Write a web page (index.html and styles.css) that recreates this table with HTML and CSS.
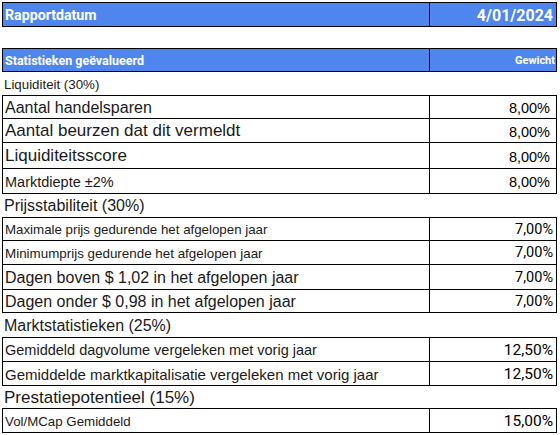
FILE: index.html
```html
<!DOCTYPE html>
<html lang="nl">
<head>
<meta charset="utf-8">
<title>Rapport</title>
<link rel="stylesheet" href="styles.css">
</head>
<body>
<div class="sheet">
  <div class="hdr hdr-top">
    <div class="cell">Rapportdatum</div>
    <div class="cell val date">4/01/2024</div>
  </div>
  <div class="hdr hdr-sub">
    <div class="cell">Statistieken geëvalueerd</div>
    <div class="cell val weight">Gewicht</div>
  </div>

  <div class="cat h23 f13">Liquiditeit (30%)</div>
  <div class="group">
    <div class="row h22"><div class="cell name f16">Aantal handelsparen</div><div class="cell val arial">8,00%</div></div>
    <div class="row h24"><div class="cell name f17">Aantal beurzen dat dit vermeldt</div><div class="cell val arial">8,00%</div></div>
    <div class="row h26"><div class="cell name f17">Liquiditeitsscore</div><div class="cell val arial">8,00%</div></div>
    <div class="row h25"><div class="cell name f14">Marktdiepte ±2%</div><div class="cell val arial">8,00%</div></div>
  </div>

  <div class="cat h23 f16">Prijsstabiliteit (30%)</div>
  <div class="group">
    <div class="row h22"><div class="cell name f13">Maximale prijs gedurende het afgelopen jaar</div><div class="cell val">7,00%</div></div>
    <div class="row h24"><div class="cell name f13m">Minimumprijs gedurende het afgelopen jaar</div><div class="cell val">7,00%</div></div>
    <div class="row h25"><div class="cell name f16">Dagen boven $ 1,02 in het afgelopen jaar</div><div class="cell val">7,00%</div></div>
    <div class="row h23"><div class="cell name f16">Dagen onder $ 0,98 in het afgelopen jaar</div><div class="cell val">7,00%</div></div>
  </div>

  <div class="cat h24 f16">Marktstatistieken (25%)</div>
  <div class="group">
    <div class="row h23"><div class="cell name f14">Gemiddeld dagvolume vergeleken met vorig jaar</div><div class="cell val big">12,50%</div></div>
    <div class="row h24"><div class="cell name f15">Gemiddelde marktkapitalisatie vergeleken met vorig jaar</div><div class="cell val big">12,50%</div></div>
  </div>

  <div class="cat h22 f17">Prestatiepotentieel (15%)</div>
  <div class="group">
    <div class="row h23"><div class="cell name f13">Vol/MCap Gemiddeld</div><div class="cell val big">15,00%</div></div>
  </div>
</div>
</body>
</html>
```

FILE: styles.css
```css
* { box-sizing: border-box; }

html, body {
  margin: 0;
  padding: 0;
  background: #fff;
}

.sheet {
  width: 557px;
  padding: 2px 0 0 2px;
  font-family: "Liberation Sans", Arial, sans-serif;
  color: #1a1a1a;
}

.hdr {
  display: grid;
  grid-template-columns: 426px 1fr;
  background: #4f86ee;
  border: 1px solid #000;
  color: #fff;
  font-family: Roboto, "Liberation Sans", sans-serif;
  font-weight: 700;
}

.hdr-top {
  height: 25px;
  font-size: 14.2px;
}

.hdr-sub {
  height: 24px;
  margin-top: 21px;
  font-size: 12.5px;
}

.cell {
  display: flex;
  align-items: center;
  padding: 0 2px;
  white-space: nowrap;
  overflow: hidden;
}

.val {
  justify-content: flex-end;
  border-left: 1px solid #000;
  padding-right: 3px;
  font-family: Roboto, "Liberation Sans", sans-serif;
  font-size: 14.5px;
  color: #000;
}

.hdr .val { color: #fff; }

.date {
  font-size: 16px;
  padding-right: 3px;
  padding-top: 1px;
}

.weight {
  font-size: 11px;
  padding-right: 1px;
}

.arial {
  font-family: "Liberation Sans", Arial, sans-serif;
  font-size: 14.5px;
  padding-right: 6px;
  padding-top: 2px;
}

.big { font-size: 15.5px; }

.cat {
  display: flex;
  align-items: center;
  padding-left: 2px;
  padding-top: 1px;
  white-space: nowrap;
}

.group {
  width: 555px;
  border: 1px solid #000;
}

.row {
  display: grid;
  grid-template-columns: 426px 1fr;
  border-top: 1px solid #000;
}

.row:first-child { border-top: none; }

.name { padding-top: 1px; }

.h22 { height: 22px; }
.h23 { height: 23px; }
.h24 { height: 24px; }
.h25 { height: 25px; }
.h26 { height: 26px; }

.f13 { font-size: 13.3px; }
.f13m { font-size: 13.4px; }
.f14 { font-size: 14.5px; }
.f15 { font-size: 15px; }
.f16 { font-size: 16px; }
.f17 { font-size: 17px; }
```
